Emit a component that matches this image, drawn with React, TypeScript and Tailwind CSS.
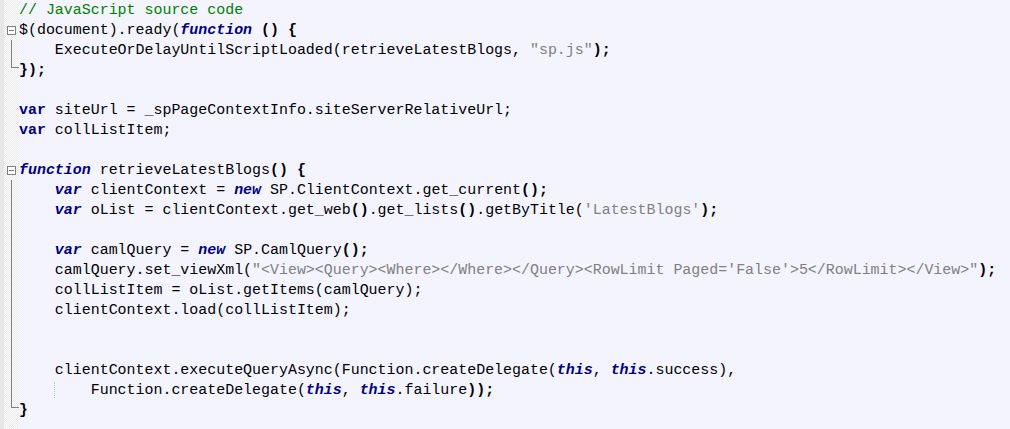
import React from "react";

type Tok = [string, string?];

const C = "text-[#008000]";
const K = "text-[#000080] font-bold";
const KI = "text-[#000080] font-bold italic";
const S = "text-[#808080]";
const P = "font-bold text-black";
const G = "border-l border-dotted border-[#9fd89f] -ml-px";

const lines: Tok[][] = [
  [["// JavaScript source code", C]],
  [["$(document).ready("], ["function", KI], [" "], ["()", P], [" "], ["{", P]],
  [["    ExecuteOrDelayUntilScriptLoaded(retrieveLatestBlogs, "], ['"sp.js"', S], [");", P]],
  [["});", P]],
  [],
  [["var", K], [" siteUrl = _spPageContextInfo.siteServerRelativeUrl;"]],
  [["var", K], [" collListItem;"]],
  [],
  [["function", KI], [" retrieveLatestBlogs"], ["()", P], [" "], ["{", P]],
  [["    "], ["var", KI], [" clientContext = "], ["new", KI], [" SP.ClientContext.get_current"], ["();", P]],
  [["    "], ["var", KI], [" oList = clientContext.get_web"], ["()", P], [".get_lists"], ["()", P], [".getByTitle("], ["'LatestBlogs'", S], [");", P]],
  [],
  [["    "], ["var", KI], [" camlQuery = "], ["new", KI], [" SP.CamlQuery"], ["();", P]],
  [["    camlQuery.set_viewXml("], ["\"<View><Query><Where></Where></Query><RowLimit Paged='False'>5</RowLimit></View>\"", S], [");", P]],
  [["    collListItem = oList.getItems(camlQuery);"]],
  [["    clientContext.load(collListItem);"]],
  [],
  [],
  [["    clientContext.executeQueryAsync(Function.createDelegate("], ["this", KI], [", "], ["this", KI], [".success),"]],
  [["    "], ["    ", G], ["Function.createDelegate("], ["this", KI], [", "], ["this", KI], [".failure"], ["));", P]],
  [["}", P]],
];

const fold: Record<number, "start" | "mid" | "end"> = {
  1: "start",
  2: "mid",
  3: "end",
  8: "start",
  9: "mid",
  10: "mid",
  11: "mid",
  12: "mid",
  13: "mid",
  14: "mid",
  15: "mid",
  16: "mid",
  17: "mid",
  18: "mid",
  19: "mid",
  20: "end",
};

function FoldCell({ kind }: { kind?: "start" | "mid" | "end" }) {
  if (kind === "start")
    return (
      <div className="h-[20px] pl-[3px] pt-[6px] flex flex-col items-start">
        <div className="w-[9px] flex flex-col items-center">
          <div className="w-[9px] h-[9px] border border-[#808080] bg-white flex items-center justify-center">
            <div className="w-[5px] h-px bg-[#808080]" />
          </div>
          <div className="w-px flex-1 h-[5px] bg-[#808080]" />
        </div>
      </div>
    );
  if (kind === "mid")
    return (
      <div className="h-[20px] pl-[7px]">
        <div className="w-px h-full bg-[#808080]" />
      </div>
    );
  if (kind === "end")
    return (
      <div className="h-[20px] pl-[7px]">
        <div className="w-[8px] h-[8px] border-l border-b border-[#808080]" />
      </div>
    );
  return <div className="h-[20px]" />;
}

export default function App() {
  return (
    <div className="w-[1010px] h-[429px] overflow-hidden bg-[#f4f4ff] flex">
      <div className="w-[19px] h-full shrink-0 border-l-[4px] border-[#e6e6e6] bg-[repeating-conic-gradient(#ececec_0%_25%,#fbfbfb_0%_50%)] bg-[length:2px_2px]">
        {lines.map((_, i) => (
          <FoldCell key={i} kind={fold[i]} />
        ))}
      </div>
      <div className="flex-1 font-['Liberation_Mono','Courier_New',monospace] text-[14.95px] leading-[20px] text-black whitespace-pre">
        {lines.map((toks, i) => (
          <div key={i} className="h-[20px]">
            {toks.map(([t, cls], j) => (
              <span key={j} className={cls}>
                {t}
              </span>
            ))}
          </div>
        ))}
      </div>
    </div>
  );
}
